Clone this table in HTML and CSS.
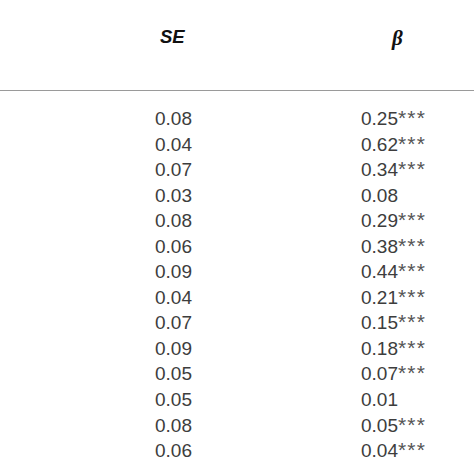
FILE: index.html
```html
<!DOCTYPE html>
<html>
<head>
<meta charset="utf-8">
<link rel="stylesheet" href="styles.css">
</head>
<body>
<div class="table">
  <div class="head">
    <div class="hcell se">SE</div>
    <div class="hcell beta">β</div>
  </div>
  <div class="body">
    <div class="row"><div class="c1">0.08</div><div class="c2">0.25<span class="sig">***</span></div></div>
    <div class="row"><div class="c1">0.04</div><div class="c2">0.62<span class="sig">***</span></div></div>
    <div class="row"><div class="c1">0.07</div><div class="c2">0.34<span class="sig">***</span></div></div>
    <div class="row"><div class="c1">0.03</div><div class="c2">0.08</div></div>
    <div class="row"><div class="c1">0.08</div><div class="c2">0.29<span class="sig">***</span></div></div>
    <div class="row"><div class="c1">0.06</div><div class="c2">0.38<span class="sig">***</span></div></div>
    <div class="row"><div class="c1">0.09</div><div class="c2">0.44<span class="sig">***</span></div></div>
    <div class="row"><div class="c1">0.04</div><div class="c2">0.21<span class="sig">***</span></div></div>
    <div class="row"><div class="c1">0.07</div><div class="c2">0.15<span class="sig">***</span></div></div>
    <div class="row"><div class="c1">0.09</div><div class="c2">0.18<span class="sig">***</span></div></div>
    <div class="row"><div class="c1">0.05</div><div class="c2">0.07<span class="sig">***</span></div></div>
    <div class="row"><div class="c1">0.05</div><div class="c2">0.01</div></div>
    <div class="row"><div class="c1">0.08</div><div class="c2">0.05<span class="sig">***</span></div></div>
    <div class="row"><div class="c1">0.06</div><div class="c2">0.04<span class="sig">***</span></div></div>
  </div>
</div>
</body>
</html>
```
FILE: styles.css
```css
html, body {
  margin: 0;
  padding: 0;
  background: #ffffff;
  overflow: hidden;
}
.table {
  width: 474px;
  font-family: "Liberation Sans", Arial, sans-serif;
  color: #3d3d3d;
}
.head {
  display: flex;
  height: 90px;
  border-bottom: 1px solid #9a9a9a;
  box-sizing: content-box;
}
.hcell {
  padding-top: 27px;
  font-size: 18px;
  line-height: 20px;
  color: #111;
}
.se {
  margin-left: 160px;
  width: 232px;
  font-weight: bold;
  font-style: italic;
  font-size: 18.5px;
  font-family: "Liberation Sans", Arial, sans-serif;
}
.beta {
  font-family: "Liberation Serif", "DejaVu Serif", serif;
  font-weight: bold;
  font-style: italic;
  font-size: 21px;
  padding-top: 28px;
}
.body {
  padding-top: 15px;
}
.row {
  display: flex;
  height: 25.55px;
  line-height: 25.55px;
  font-size: 19px;
}
.c1 {
  margin-left: 155px;
  width: 206px;
}
.c2 {
  white-space: nowrap;
}
.sig {
  font-size: 21px;
  line-height: 0;
  letter-spacing: 1.2px;
  color: #555;
}
```
